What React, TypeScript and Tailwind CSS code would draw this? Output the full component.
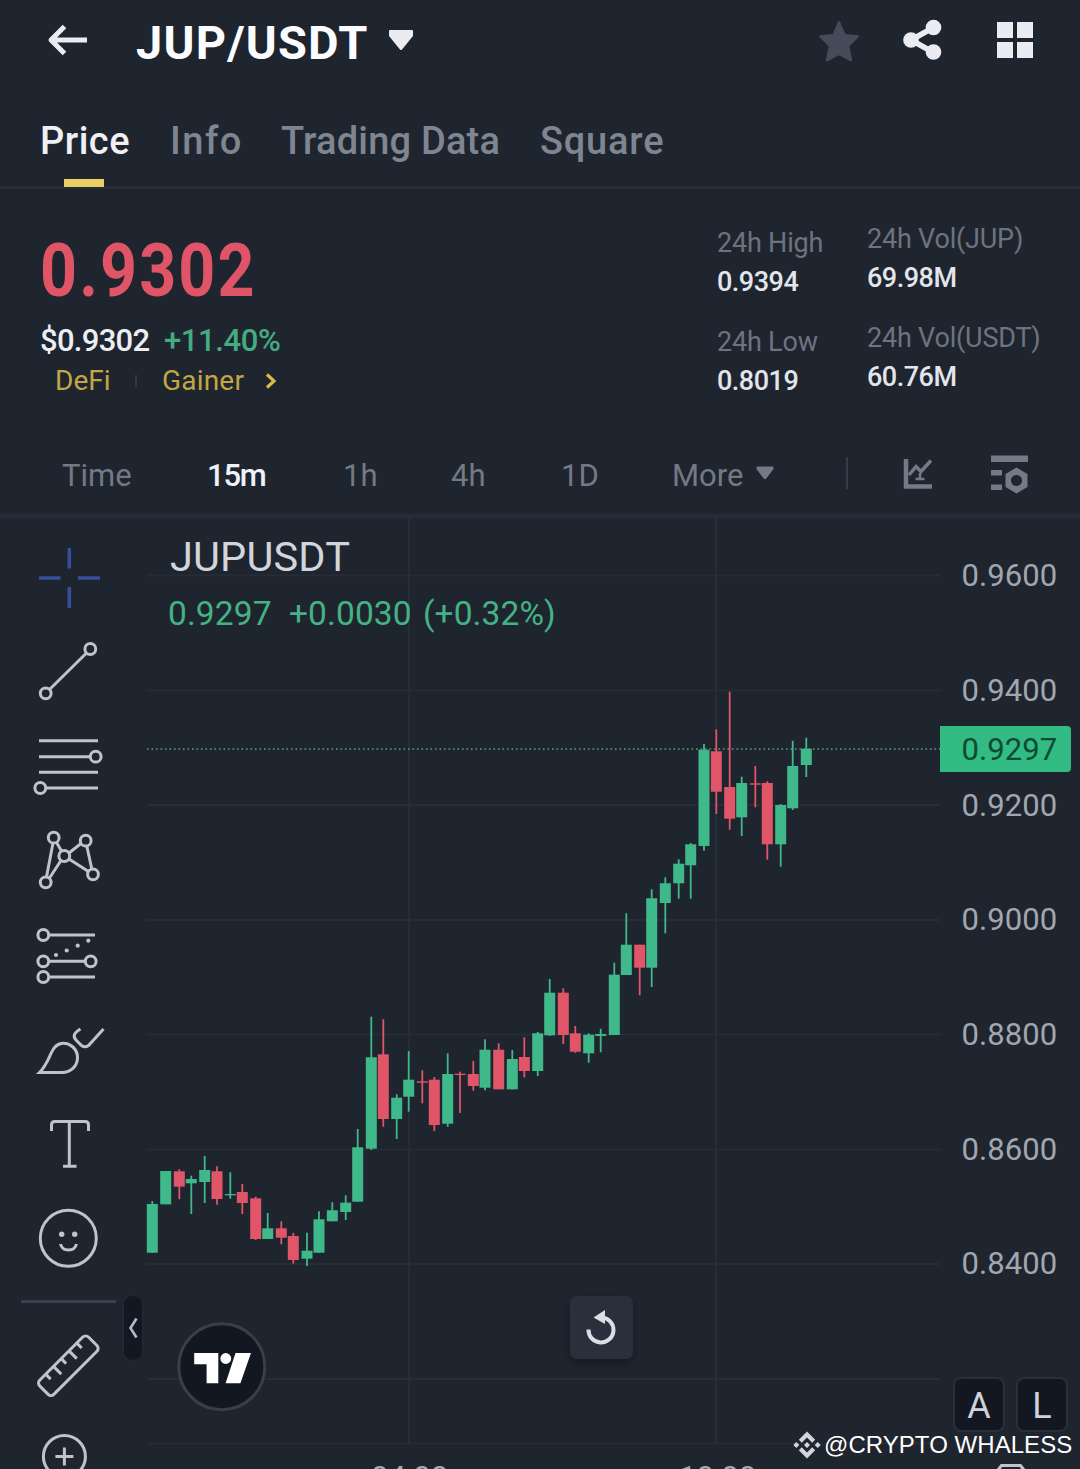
import React from "react";

type Candle = {
  x: number;
  high: number;
  top: number;
  bottom: number;
  low: number;
  up: boolean;
};

const UP = "#3fb98a";
const DOWN = "#e05568";

// x, high, body top, body bottom, low, 1 = up / 0 = down
const rows: number[][] = [
  [152.3, 1201, 1204, 1252.7, 1252.7, 1],
  [165.7, 1171, 1171, 1204.3, 1204.3, 1],
  [179.3, 1169.3, 1171.3, 1186.7, 1199.3, 0],
  [191.3, 1175.7, 1179, 1183.3, 1214, 1],
  [204.7, 1156, 1170, 1182, 1203, 1],
  [217, 1166.3, 1171.3, 1199, 1204.7, 0],
  [230.3, 1172.3, 1194, 1195.3, 1198.7, 1],
  [242.3, 1184, 1192, 1203, 1214, 0],
  [255.7, 1196.7, 1198.3, 1239, 1240, 0],
  [267.7, 1213, 1228.3, 1239, 1239, 1],
  [281.3, 1221.3, 1228.3, 1237.7, 1244.3, 0],
  [293.3, 1233, 1236, 1260, 1263.7, 0],
  [307, 1232.7, 1250.7, 1258.7, 1266, 1],
  [319, 1211.3, 1219.3, 1252.7, 1252.7, 1],
  [332.3, 1202.3, 1210.3, 1221.3, 1221.3, 1],
  [345.7, 1195.3, 1202.7, 1212, 1220, 1],
  [357.7, 1129, 1147.3, 1201.7, 1201.7, 1],
  [371.3, 1016.7, 1057.3, 1148.7, 1150, 1],
  [383.3, 1019.3, 1054.3, 1119, 1126.7, 0],
  [396.7, 1094.3, 1097.7, 1119, 1139, 1],
  [408.7, 1051, 1079.7, 1096.7, 1111.7, 1],
  [422.3, 1070.3, 1081.3, 1082.7, 1103.3, 0],
  [434.3, 1077, 1079.7, 1125, 1131, 0],
  [447.7, 1053.3, 1074, 1123.7, 1126.7, 1],
  [460, 1071.7, 1073.7, 1075, 1113, 0],
  [473.3, 1061, 1074, 1086, 1090.7, 0],
  [485, 1039.3, 1049.7, 1087.7, 1090.3, 1],
  [498.7, 1043.3, 1049.7, 1089.3, 1089.3, 0],
  [512.3, 1050, 1059, 1089.3, 1089.3, 1],
  [524.3, 1037.3, 1057, 1071, 1077.3, 0],
  [537.7, 1032, 1033.3, 1071, 1076, 1],
  [549.7, 979, 992.7, 1035.3, 1036, 1],
  [563.3, 988.3, 992.7, 1035, 1044, 0],
  [575.3, 1026, 1033.3, 1051.7, 1052.7, 0],
  [588.7, 1033.3, 1034.7, 1053.3, 1062.7, 1],
  [600.7, 1028.7, 1034, 1036, 1052.3, 1],
  [614.3, 962.7, 974.7, 1035, 1035, 1],
  [626.3, 913.3, 944.7, 975, 975, 1],
  [639.7, 944.7, 944.7, 967.7, 995.3, 0],
  [651.7, 889.3, 898.3, 967.7, 987, 1],
  [665.3, 877.3, 883.3, 903, 933.3, 1],
  [678.7, 859.3, 863.7, 883.3, 898.7, 1],
  [690.7, 843, 844.3, 865.3, 898.7, 1],
  [704, 744, 749.7, 846, 850.7, 1],
  [716.3, 729.3, 751.3, 791.7, 814, 0],
  [729.7, 691.7, 787, 818.7, 829.7, 0],
  [741.7, 776.7, 783, 817.3, 836, 1],
  [755.3, 766, 783.3, 784.7, 807.3, 0],
  [767.3, 781.3, 783, 844.3, 859.7, 0],
  [780.7, 804, 805, 844.3, 866.7, 1],
  [792.7, 740.7, 766, 808.3, 810, 1],
  [806.3, 737.7, 748.7, 765, 777, 1],
];

const candles: Candle[] = rows.map(([x, high, top, bottom, low, up]) => ({
  x,
  high,
  top,
  bottom,
  low,
  up: up === 1,
}));

const gridY = [575.5, 690.5, 805, 920, 1034.5, 1149.5, 1264, 1379, 1443.5];
const gridX = [409, 716];
const prices = ["0.9600", "0.9400", "0.9200", "0.9000", "0.8800", "0.8600", "0.8400"];

function Header() {
  return (
    <header className="flex h-[82px] shrink-0 items-center">
      <svg className="ml-[44px] mb-[2px] h-[40px] w-[46px]" viewBox="44 20 46 40" fill="none" stroke="#ebecf2" strokeWidth="5">
        <path d="M87 40H51M64.5 26.5L51 40l13.5 13.5" strokeLinejoin="round" />
      </svg>
      <h1 className="ml-[46px] w-[248px] whitespace-nowrap pt-[2px] text-[47px] font-bold leading-none tracking-[1.200px] text-[#fbfcff]">
        JUP/USDT
      </h1>
      <svg className="ml-[4px] mb-[2px] h-[22px] w-[26px]" viewBox="0 0 26 22">
        <path d="M2 1h22q1 0 1 1v5L14 20.500q-1 1-2 0L1 7V2q0-1 1-1z" fill="#ebecf2" />
      </svg>
      <div className="flex-1" />
      <svg className="mr-[42px] h-[44px] w-[42px]" viewBox="818 19 42 44">
        <path
          d="M839 22l5.600 13 13.400 1.300-9.800 9.700 3 14.500-12.200-6.500-12.200 6.500 3-14.500-9.800-9.700 13.400-1.300z"
          fill="#464b59"
          stroke="#464b59"
          strokeWidth="2"
          strokeLinejoin="round"
        />
      </svg>
      <svg className="mr-[55px] mb-[2px] h-[42px] w-[40px]" viewBox="902 19 40 42" fill="#ebecf2">
        <path d="M933.500 27.500L911 40l22.500 12.500" fill="none" stroke="#ebecf2" strokeWidth="5.500" />
        <circle cx="933.500" cy="27.500" r="7.800" />
        <circle cx="911" cy="40" r="7.800" />
        <circle cx="933.500" cy="52" r="7.800" />
      </svg>
      <div className="mr-[47px] mb-[2px] grid grid-cols-2 gap-[4px]">
        <span className="h-[16px] w-[16px] bg-[#ebecf2]" />
        <span className="h-[16px] w-[16px] bg-[#ebecf2]" />
        <span className="h-[16px] w-[16px] bg-[#ebecf2]" />
        <span className="h-[16px] w-[16px] bg-[#ebecf2]" />
      </div>
    </header>
  );
}

function Tabs() {
  return (
    <nav className="flex h-[107px] shrink-0 items-center whitespace-nowrap border-b-[3px] border-[#272e38] pt-[14px] pl-[40px] text-[38px] font-medium leading-none tracking-[0.200px] text-[#7f8591]">
      <div className="relative w-[130px] tracking-[0.500px] text-[#eef0f5]">
        Price
        <span className="absolute left-[24px] top-[57px] h-[8px] w-[40px] bg-[#ebcf60]" />
      </div>
      <div className="w-[111px] tracking-[1.500px]">Info</div>
      <div className="w-[259px]">Trading Data</div>
      <div className="tracking-[0.800px]">Square</div>
    </nav>
  );
}

function Stat({ label, value }: { label: string; value: string }) {
  return (
    <div className="h-[99px] whitespace-nowrap">
      <div className="h-[39px] text-[27px] leading-[39px] tracking-[-0.200px] text-[#6d737f]">{label}</div>
      <div className="h-[39px] text-[27px] font-medium leading-[39px] tracking-[-0.500px] text-[#e3e5ec]">{value}</div>
    </div>
  );
}

function Summary() {
  return (
    <section className="flex h-[244px] shrink-0">
      <div className="w-[717px] pl-[40px] pt-[40px]">
        <div className="h-[83px] w-[250px] origin-left scale-x-[0.86] text-[75px] font-bold leading-[82px] tracking-[2.500px] text-[#e05467]">
          0.9302
        </div>
        <div className="flex h-[56px] items-center text-[31px] font-medium leading-none">
          <span className="w-[124px] tracking-[-0.700px] text-[#eceef4]">$0.9302</span>
          <span className="tracking-[-0.400px] text-[#45ab80]">+11.40%</span>
        </div>
        <div className="flex h-[26px] items-center pl-[15px] text-[28px] leading-none text-[#c3a544]">
          <span className="w-[80px]">DeFi</span>
          <span className="h-[12px] w-[2px] bg-[#333a45]" />
          <span className="ml-[25px] w-[102px] tracking-[0.200px]">Gainer</span>
          <svg className="h-[16px] w-[14px]" viewBox="0 0 14 16" fill="none" stroke="#dcb944" strokeWidth="3.200">
            <path d="M3 1.500L10 8l-7 6.500" />
          </svg>
        </div>
      </div>
      <div className="w-[150px] pt-[35px]">
        <Stat label="24h High" value="0.9394" />
        <Stat label="24h Low" value="0.8019" />
      </div>
      <div className="pt-[31px]">
        <Stat label="24h Vol(JUP)" value="69.98M" />
        <Stat label="24h Vol(USDT)" value="60.76M" />
      </div>
    </section>
  );
}

function Intervals() {
  return (
    <div className="flex h-[85px] shrink-0 items-center whitespace-nowrap border-b-[4px] border-[#252c37] pl-[62px] pt-[3px] text-[31px] leading-none text-[#737985]">
      <span className="w-[145px]">Time</span>
      <span className="w-[136px] font-medium tracking-[-1.200px] text-[#f0f2f7]">15m</span>
      <span className="w-[108px]">1h</span>
      <span className="w-[110px]">4h</span>
      <span className="w-[111px]">1D</span>
      <span className="w-[84px]">More</span>
      <svg className="mb-[4px] h-[14px] w-[18px]" viewBox="0 0 18 14">
        <path d="M1 1h16v2L9.800 12.500q-.8.8-1.600 0L1 3z" fill="#737985" stroke="#737985" strokeLinejoin="round" />
      </svg>
      <span className="ml-[72px] mb-[4px] h-[32px] w-[2px] bg-[#363c47]" />
      <svg className="ml-[55px] mb-[5px] h-[32px] w-[30px]" viewBox="903 456 30 32" fill="none" stroke="#737985">
        <path d="M906 458v27.500h26" strokeWidth="4.500" />
        <path d="M909 474l7-8.500 5 5 10-11" strokeWidth="3.500" />
        <path d="M915.500 478h9M920 472v6" strokeWidth="2.500" />
      </svg>
      <svg className="ml-[57px] mb-[3px] h-[40px] w-[40px]" viewBox="990 454 40 40" fill="#737985">
        <path d="M991 455.500h37v6.500h-37zM991 470h11v5.500h-11zM991 484.500h11v5.500h-11z" />
        <path
          fillRule="evenodd"
          d="M1016.500 467.500l11 6.500v13l-11 6.500-11-6.500v-13zM1016.500 475a5.500 5.500 0 1 0 .01 0z"
        />
      </svg>
    </div>
  );
}

function Tool({ children }: { children: React.ReactNode }) {
  return (
    <svg
      className="ml-[21px] h-[94px] w-[94px] shrink-0"
      viewBox="0 0 94 94"
      fill="none"
      stroke="#c0c3cd"
      strokeWidth="3"
    >
      {children}
    </svg>
  );
}

function Toolbar() {
  return (
    <aside className="relative flex w-[146px] shrink-0 flex-col pt-[12px]">
      <Tool>
        <path d="M48.300 18v20.500M48.300 57v21M18 48h21.500M57 48h22" stroke="#3a4f9c" strokeWidth="3.500" />
      </Tool>
      <Tool>
        <path d="M28.500 65.500L65.500 29" />
        <circle cx="69.300" cy="25" r="5.400" />
        <circle cx="24.700" cy="69.300" r="5.400" />
      </Tool>
      <Tool>
        <path d="M18 22.700h59M18 38.700h51M18 54.300h59M25 70h52" />
        <circle cx="74.700" cy="38.700" r="5.400" />
        <circle cx="19.300" cy="70" r="5.400" />
      </Tool>
      <Tool>
        <path d="M32 31l-6.500 34M35.500 30.500l5 8.500M48 41l12-9.500M65.800 34l5 23M48 47l19.500 12.500M40 48.500L28.500 66" />
        <circle cx="32.700" cy="25.700" r="5.400" />
        <circle cx="64.700" cy="28.700" r="5.400" />
        <circle cx="43.300" cy="44" r="5.400" />
        <circle cx="72" cy="62.300" r="5.400" />
        <circle cx="24.700" cy="70.300" r="5.400" />
      </Tool>
      <Tool>
        <path d="M28 29h46M28 55.300h36M28 71h46" />
        <circle cx="22.300" cy="29" r="5.400" />
        <circle cx="22.300" cy="55.300" r="5.400" />
        <circle cx="69.700" cy="55.300" r="5.400" />
        <circle cx="22.300" cy="71" r="5.400" />
        <g fill="#c0c3cd" stroke="none">
          <circle cx="35" cy="49" r="2.100" />
          <circle cx="45.700" cy="44.500" r="2.100" />
          <circle cx="56.700" cy="39.700" r="2.100" />
          <circle cx="67.300" cy="34.700" r="2.100" />
        </g>
      </Tool>
      <Tool>
        <path d="M18.500 72.500C30 61 29 46 40 43.500C49 42 56.500 49 56.500 57.500C56.500 66 50 72.500 41 72.500Z" />
        <path d="M59.500 29C53 33 51.500 36 55 40l5.500 5.500q3.500 2.500 7 0L82.500 29" />
      </Tool>
      <Tool>
        <path d="M30.500 37v-6q0-3.500 3.500-3.500h30q3.500 0 3.500 3.500v6M48.300 28v44M42 72.300h13.500" />
      </Tool>
      <Tool>
        <circle cx="47.300" cy="50.300" r="28" />
        <path d="M39.500 56q1.500 6 8 6t8-6" />
        <circle cx="40.700" cy="46.300" r="2.700" fill="#c0c3cd" stroke="none" />
        <circle cx="53.700" cy="46.300" r="2.700" fill="#c0c3cd" stroke="none" />
      </Tool>
      <div className="ml-[21px] mt-[18px] h-[3px] w-[95px] shrink-0 bg-[#3a404b]" />
      <svg
        className="ml-[21px] mt-[15px] h-[94px] w-[94px] shrink-0"
        viewBox="21 1318 94 94"
        fill="none"
        stroke="#c0c3cd"
        strokeWidth="3"
      >
        <g transform="translate(68.300 1365.700) rotate(-45)">
          <rect x="-34.500" y="-10" width="69" height="20" rx="4" />
          <path d="M-22-10v7M-11-10v11M0-10v7M11-10v11M22-10v7" />
        </g>
      </svg>
      <svg
        className="ml-[21px] h-[57px] w-[94px] shrink-0"
        viewBox="21 1412 94 57"
        fill="none"
        stroke="#c0c3cd"
        strokeWidth="3"
      >
        <circle cx="64.400" cy="1456.500" r="21" />
        <path d="M64.400 1447.500v18M55.400 1456.500h18" />
      </svg>
      <div className="absolute left-[123px] top-[777px] flex h-[66px] w-[20px] items-center justify-center rounded-[9px] border border-[#242a35] bg-[#131722]">
        <svg className="h-[22px] w-[10px]" viewBox="0 0 10 22" fill="none" stroke="#b5b8c2" strokeWidth="2.600">
          <path d="M8.500 1.500L2.500 11l6 9.500" />
        </svg>
      </div>
    </aside>
  );
}

function Chart() {
  return (
    <div className="relative w-[794px] shrink-0">
      <svg className="block h-[951px] w-[794px]" viewBox="146 518 794 951">
        {gridY.map((y) => (
          <line key={y} x1="147" x2="940" y1={y} y2={y} stroke="#262d37" strokeWidth="2" />
        ))}
        {gridX.map((x) => (
          <line key={x} x1={x} x2={x} y1="518" y2="1444" stroke="#262d37" strokeWidth="2" />
        ))}
        <line x1="147" x2="940" y1="749" y2="749" stroke="#5b9c85" strokeWidth="1.700" strokeDasharray="1.600 2.900" />
        {candles.map((c) => (
          <g key={c.x} fill={c.up ? UP : DOWN}>
            <rect x={c.x - 0.9} y={c.high} width="1.800" height={c.low - c.high} />
            <rect x={c.x - 5.5} y={c.top} width="11" height={c.bottom - c.top} />
          </g>
        ))}
      </svg>

      <div className="absolute left-[24px] top-[14px] whitespace-nowrap leading-none">
        <div className="h-[50px] text-[41.500px] leading-[50px] tracking-[0.150px] text-[#d3d5dc]">JUPUSDT</div>
        <div className="mt-[7px] flex h-[50px] text-[33.500px] leading-[50px] tracking-[0.100px] text-[#45b284]">
          <span className="-ml-[2px] w-[121px]">0.9297</span>
          <span className="w-[134px]">+0.0030</span>
          <span>(+0.32%)</span>
        </div>
      </div>

      <svg className="absolute left-[30px] top-[803px] h-[92px] w-[92px]" viewBox="176 1321 92 92">
        <circle cx="221.800" cy="1366.700" r="43" fill="#131722" stroke="#3a3e49" strokeWidth="3" />
        <path d="M194.200 1353h24.100v30.300h-11.700v-19h-12.400zM235.500 1353h15.500l-10.600 30.300h-14.800z" fill="#fff" />
        <circle cx="225.800" cy="1358.500" r="5.400" fill="#fff" />
      </svg>

      <div className="absolute left-[424px] top-[778px] flex h-[63px] w-[63px] items-center justify-center rounded-[7px] bg-[#2a303b] shadow-[0_4px_8px_rgba(0,0,0,0.35)]">
        <svg className="h-[36px] w-[32px]" viewBox="585 1310 32 36">
          <path d="M587.500 1329.500a12.500 12.500 0 1 0 13.500-12" fill="none" stroke="#dcdee5" strokeWidth="4" />
          <path d="M592.500 1317.500l11.500-7.500v14z" fill="#dcdee5" />
        </svg>
      </div>

      {/* time labels run off the bottom of the screen */}
      <div className="absolute left-[225px] top-[945px] text-[31px] leading-[30px] text-[#a6a9b3]">04:00</div>
      <div className="absolute left-[533px] top-[945px] text-[31px] leading-[30px] text-[#a6a9b3]">10:00</div>
    </div>
  );
}

function PriceAxis() {
  return (
    <div className="relative flex-1 pt-[0.500px]">
      {prices.map((p) => (
        <div key={p} className="flex h-[114.700px] items-center pl-[21.500px] text-[31px] leading-none tracking-[0.100px] text-[#a2a6b0]">
          {p}
        </div>
      ))}
      <div className="absolute left-0 top-[208px] flex h-[46px] w-[131px] items-center rounded-r-[4px] bg-[#33bb84] pl-[21.500px] pt-[1px] text-[31px] leading-none tracking-[0.100px] text-[#0c4a33]">
        0.9297
      </div>
      <div className="absolute left-[13px] top-[859px] flex gap-[11px] text-[36px] leading-none text-[#d0d2da]">
        <span className="flex h-[55px] w-[52px] items-center justify-center rounded-[8px] border-2 border-[#2a2f3a] bg-[#131722] pt-[2px]">
          A
        </span>
        <span className="flex h-[55px] w-[52px] items-center justify-center rounded-[8px] border-2 border-[#2a2f3a] bg-[#131722] pt-[2px]">
          L
        </span>
      </div>
      <svg className="absolute left-[56px] top-[944px] h-[7px] w-[32px]" viewBox="996 1462 32 7">
        <path d="M998 1470l3.500-4.500h19l3.500 4.500" fill="none" stroke="#c0c3cd" strokeWidth="3" />
      </svg>
    </div>
  );
}

function Watermark() {
  return (
    <div className="absolute left-[793px] top-[1431px] flex h-[28px] items-center whitespace-nowrap font-['Liberation_Sans',Arial,sans-serif] text-[24px] leading-none text-white">
      <svg className="mr-[3px] h-[28px] w-[28px]" viewBox="0 0 28 28" fill="#d3d5dc">
        <path d="M14 .5l8.200 8.200-3 3L14 6.500l-5.200 5.200-3-3zM14 27.500l8.200-8.200-3-3L14 21.500l-5.200-5.200-3 3z" />
        <path d="M3.300 11l3 3-3 3-3-3zM24.700 11l3 3-3 3-3-3zM14 11l3 3-3 3-3-3z" />
      </svg>
      <span className="tracking-[0.050px]">@CRYPTO WHALESS</span>
    </div>
  );
}

export default function App() {
  return (
    <div className="relative flex h-[1469px] w-[1080px] flex-col overflow-hidden bg-[#1f252f] font-[Roboto,sans-serif]">
      <Header />
      <Tabs />
      <Summary />
      <Intervals />
      <main className="flex h-[951px] shrink-0">
        <Toolbar />
        <Chart />
        <PriceAxis />
      </main>
      <Watermark />
    </div>
  );
}
